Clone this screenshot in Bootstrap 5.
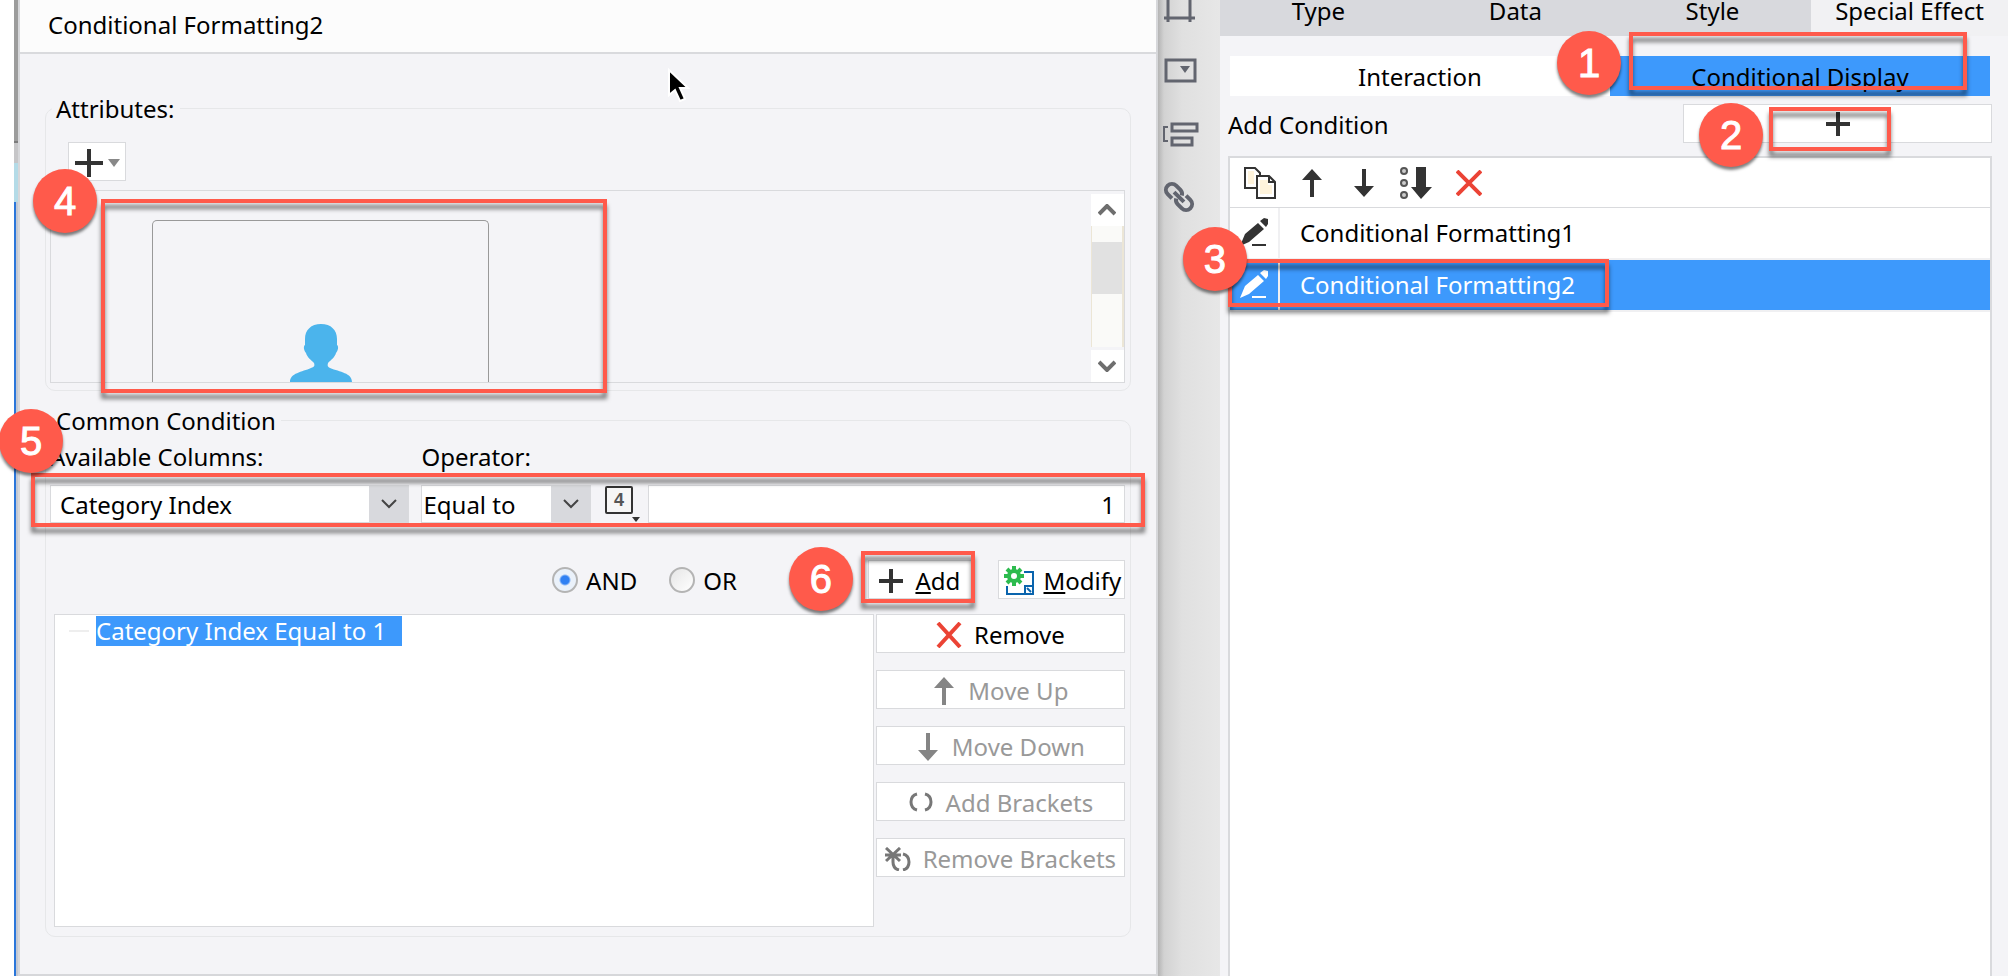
<!DOCTYPE html>
<html lang="en">
<head>
<meta charset="utf-8">
<meta name="viewport" content="width=device-width, initial-scale=1">
<title>Conditional Formatting</title>
<link href="https://cdn.jsdelivr.net/npm/bootstrap@5.3.0/dist/css/bootstrap.min.css" rel="stylesheet">
<script src="https://cdn.jsdelivr.net/npm/bootstrap@5.3.0/dist/js/bootstrap.bundle.min.js"></script>
<style>
  :root { --line: #d9dadd; --accent: #3d99fc; --note: #ff5a4b; --face: #f4f4f7; --ink: #333; }
  body { font-family: "Noto Sans", "Open Sans", sans-serif; font-size: 24px; line-height: 24px; color: #000; background: #fff; overflow-x: hidden; }
  svg { display: block; flex: none; }
  button, select, input { font: inherit; color: inherit; }

  .page-edge { width: 18px; padding-left: 14px; }
  .edge-grey { height: 143px; background: #9c9c9c; border-bottom: 2px solid #7c7c7c; }
  .edge-light { height: 20px; background: #c6c6c8; }
  .edge-sky { height: 39px; background: #b4dbe7; }
  .edge-blue { background: linear-gradient(to right, #2a76da 50%, #c3c8d2 50%); }

  .dialog-box { min-width: 0; background: var(--face); border: 2px solid #d6d7da; border-top: 0; }
  .dialog-title { height: 54px; padding: 0 28px 2px; background: #fcfcfc; border-bottom: 2px solid var(--line); font-size: 24px; font-weight: 400; }
  .dialog-main { padding: 42px 25px 37px 25px; }
  .group { border: 1px solid #e6e7e9; border-radius: 10px; padding: 0 5px 0 4px; min-width: 0; }
  .group legend { font-size: 24px; line-height: 24px; margin: 0 0 0 2px; padding: 1px 5px 0 4px; }
  .group-attr { padding-top: 21px; padding-bottom: 7px; margin-bottom: 17px; }
  .group-cond { padding-top: 12px; padding-bottom: 9px; }

  .tool { background: #fff; border: 1px solid var(--line); border-radius: 0; height: 39px; padding: 2px 0 0; display: flex; align-items: center; justify-content: center; gap: 12px; white-space: nowrap; }
  .tool:disabled { color: #999; opacity: 1; background: #fff; }
  .tool-menu { width: 58px; margin-left: 18px; gap: 5px; }
  .preview { height: 193px; margin-top: 9px; border: 1px solid var(--line); }
  .preview-card { width: 337px; height: 162px; margin: 29px 0 0 101px; border: 1px solid #999; border-bottom: 0; border-radius: 5px 5px 0 0; }
  .scroll-col { width: 33px; padding-top: 3px; }
  .scroll-btn { height: 32px; border: 0; padding: 0; background: #fff; width: 100%; }
  .scroll-track { background: #fafaf8; border: solid #ece6d6; border-width: 0 2px 0 1px; margin-bottom: 3px; padding-top: 16px; }
  .scroll-thumb { height: 52px; background: #e1e1e1; }

  .col-columns { width: 34%; }
  .col-columns + * { margin-left: 6px; }
  .col-pick { padding-right: 6px; }
  .fields { margin-top: 16px; }
  .pick { appearance: none; width: 100%; height: 38px; border: 1px solid var(--line); border-radius: 0; padding: 1px 44px 0 9px; line-height: 36px;
    background: url("data:image/svg+xml,%3Csvg xmlns='http://www.w3.org/2000/svg' width='40' height='38'%3E%3Cpath d='M0 0h40v38H0z' fill='%23d8d9dd'/%3E%3Cpath d='M13 15l7 7 7-7' fill='none' stroke='%23444' stroke-width='2'/%3E%3C/svg%3E") right center / 40px 38px no-repeat border-box #fff; }
  .pick-op { width: 170px; padding-left: 1px; }
  .type-btn { width: 57px; border: 0; padding: 1px 9px 0 13px; background: none; height: 38px; }
  .value-box { min-width: 0; height: 38px; border: 1px solid var(--line); border-radius: 0; padding: 0 9px; text-align: right; }

  .actions { margin-top: 37px; margin-bottom: 15px; }
  .dot { appearance: none; width: 26px; height: 26px; margin: 0 8px 0 0; border: 2px solid #b4b4b4; border-radius: 50%; background: linear-gradient(135deg, #e6e6e6, #fff); }
  .dot:checked { background: radial-gradient(circle, #2f80f3 4px, #eaf1fa 6px); }
  .actions label { margin-right: 32px; padding-top: 2px; }
  .radio-set { margin-right: 99px; }
  .btn-add { width: 104px; margin-right: 26px; }
  .btn-modify { width: 127px; gap: 10px; padding-left: 2px; }
  .tree { min-height: 313px; background: #fff; border: 1px solid var(--line); margin-left: 4px; margin-right: 2px; padding: 1px 0 0 14px; }
  .tree-line { width: 20px; height: 2px; background: #eee; margin-right: 7px; margin-top: 14px; }
  .tree-item { background: var(--accent); color: #fff; height: 30px; line-height: 30px; padding-right: 16px; }
  .side-btns { width: 249px; gap: 17px; }

  .icon-rail { width: 62px; background: linear-gradient(to right, #b4b4b4, #d2d2d2 6px, #e0e0e0 24px, #e7e7e7); padding-left: 5px; }

  .props { width: 39.25%; background: var(--face); }
  .main-tabs { height: 36px; background: #d8d9dd; }
  .main-tabs .tab { height: 36px; border: 0; border-radius: 0; background: none; padding: 0 0 14px; line-height: 22px; flex: 1 1 0; white-space: nowrap; }
  .main-tabs .tab.active { background: #f1f1f3; }
  .props-main { padding: 20px 16px 0 8px; }
  .seg { margin: 0 2px 8px 2px; }
  .seg-btn { flex: 1 1 0; height: 40px; border: 0; padding: 2px 0 0; background: #fff; }
  .seg-btn.active { background: var(--accent); }
  .add-row { margin-bottom: 13px; }
  .add-row label { padding-top: 2px; }
  .add-btn { width: 309px; padding: 0; }
  .cond-box { background: #fff; border: solid var(--line); border-width: 2px 2px 0 2px; }
  .cond-tools { height: 50px; padding: 0 14px; border-bottom: 1px solid var(--line); }
  .cond-tools button { border: 0; background: none; padding: 0; }
  .cond-list { border-collapse: separate; border-spacing: 0; }
  .cond-list td { padding: 0; height: 52px; border-bottom: 2px solid #f0f0f2; vertical-align: middle; }
  .cond-list td:first-child { width: 50px; border-right: 2px solid #f0f0f2; padding-left: 10px; }
  .cond-list td:last-child { padding-left: 20px; }
  .cond-list .picked td { background: var(--accent); background-clip: padding-box; color: #fff; }

  .note-frame { position: absolute; border: 4px solid var(--note); filter: drop-shadow(0 6px 2px rgba(0,0,0,.5)); pointer-events: none; z-index: 2; }
  .note-dot { position: absolute; width: 64px; height: 64px; border-radius: 50%; background: var(--note); color: #fff; font: 40px/64px "Liberation Sans", sans-serif; text-align: center; -webkit-text-stroke: 1px #fff; box-shadow: 0 3px 3px rgba(0,0,0,.5); z-index: 3; }
  .frame-1 { top: -24px; right: 23px; width: 338px; height: 58px; }
  .dot-1 { top: -25px; right: 369px; }
  .frame-2 { top: 3px; right: 101px; width: 122px; height: 44px; }
  .dot-2 { top: -1px; right: 229px; }
  .frame-3 { top: 101px; left: -2px; width: 381px; height: 48px; }
  .dot-3 { top: 69px; left: -47px; }
  .frame-4 { top: 8px; left: 50px; width: 506px; height: 194px; }
  .dot-4 { top: -22px; left: -18px; }
  .frame-5 { inset: -12px -20px -4px -19px; }
  .dot-5 { top: -76px; left: -51px; }
  .frame-6 { inset: -9px -3px -4px -7px; }
  .dot-6 { top: -13px; left: -79px; }
  .pointer { position: absolute; left: 57%; top: 14px; }
</style>
</head>
<body>
<div class="d-flex min-vh-100 align-items-stretch">

  <div class="page-edge d-flex flex-column flex-shrink-0" aria-hidden="true">
    <div class="edge-grey"></div>
    <div class="edge-light"></div>
    <div class="edge-sky"></div>
    <div class="edge-blue flex-grow-1"></div>
  </div>

  <section class="dialog-box flex-grow-1" aria-label="Conditional Formatting2">
    <h1 class="dialog-title d-flex align-items-center m-0">Conditional Formatting2</h1>
    <div class="dialog-main position-relative">
      <svg class="pointer" width="24" height="36" viewBox="0 0 24 36"><path d="M2 2v25l6-5 5 11 5-2-5-11h8z" fill="#000" stroke="#fff" stroke-width="2"/></svg>

      <fieldset class="group group-attr">
        <legend class="float-none w-auto">Attributes:</legend>
        <button type="button" class="tool tool-menu" aria-label="Add attribute">
          <svg width="28" height="28" viewBox="0 0 28 28"><path d="M14 0v28M0 14h28" stroke="#333" stroke-width="4"/></svg>
          <svg width="12" height="9" viewBox="0 0 12 9"><path d="M0 1h12L6 9z" fill="#888"/></svg>
        </button>
        <div class="preview position-relative d-flex">
          <div class="flex-grow-1">
            <div class="preview-card d-flex justify-content-center align-items-end">
              <svg width="62" height="58" viewBox="0 0 62 58"><path fill="#4bb4ec" d="M31 0c10 0 16 6 16 15v6c2 1 1 6-1 8-1 4-5 7-8 10-1 3 0 4 2 5 10 4 22 5 22 14H0C0 49 12 48 21 44c3-1 4-2 3-5-3-3-7-6-8-10-2-2-3-7-1-8v-6C15 6 21 0 31 0z"/></svg>
            </div>
          </div>
          <div class="scroll-col d-flex flex-column">
            <button type="button" class="scroll-btn d-flex justify-content-center align-items-center" aria-label="Scroll up"><svg width="18" height="12" viewBox="0 0 18 12"><path d="M1 10l8-8 8 8" fill="none" stroke="#6e6e6e" stroke-width="4"/></svg></button>
            <div class="scroll-track flex-grow-1"><div class="scroll-thumb"></div></div>
            <button type="button" class="scroll-btn d-flex justify-content-center align-items-center" aria-label="Scroll down"><svg width="18" height="12" viewBox="0 0 18 12"><path d="M1 2l8 8 8-8" fill="none" stroke="#6e6e6e" stroke-width="4"/></svg></button>
          </div>
          <span class="note-frame frame-4"></span>
          <span class="note-dot dot-4">4</span>
        </div>
      </fieldset>

      <fieldset class="group group-cond">
        <legend class="float-none w-auto">Common Condition</legend>
        <div class="d-flex">
          <label class="col-columns" for="columns">Available Columns:</label>
          <label for="operator">Operator:</label>
        </div>
        <div class="fields position-relative d-flex">
          <div class="col-columns col-pick"><select id="columns" class="pick"><option>Category Index</option></select></div>
          <select id="operator" class="pick pick-op"><option>Equal to</option></select>
          <button type="button" class="type-btn d-flex" aria-label="Value type">
            <svg width="36" height="36" viewBox="0 0 36 36"><rect x="2" y="1" width="26" height="26" rx="1" fill="#f6f6f6" stroke="#333" stroke-width="2"/><text x="15" y="20" text-anchor="middle" font-family="Liberation Sans, sans-serif" font-size="18" font-weight="700" fill="#555">4</text><path d="M28 31h8l-4 5z" fill="#333"/></svg>
          </button>
          <input type="text" class="value-box flex-grow-1" value="1" aria-label="Value">
          <span class="note-frame frame-5"></span>
          <span class="note-dot dot-5">5</span>
        </div>

        <div class="actions d-flex justify-content-end align-items-center">
          <div class="radio-set d-flex align-items-center">
            <input class="dot" type="radio" name="join" id="join-and" checked><label for="join-and">AND</label>
            <input class="dot" type="radio" name="join" id="join-or"><label for="join-or" class="flex-shrink-0">OR</label>
          </div>
          <div class="position-relative btn-add">
            <button type="button" class="tool w-100"><svg width="24" height="24" viewBox="0 0 24 24"><path d="M12 0v24M0 12h24" stroke="#333" stroke-width="4"/></svg><span><u>A</u>dd</span></button>
            <span class="note-frame frame-6"></span>
            <span class="note-dot dot-6">6</span>
          </div>
          <button type="button" class="tool btn-modify">
            <svg width="30" height="30" viewBox="0 0 30 30"><path d="M20 6h9v22H3V20" fill="none" stroke="#0a64ad" stroke-width="2"/><rect x="21" y="20" width="8" height="8" fill="#fff" stroke="#0a64ad" stroke-width="2"/><path d="M23 22l4 4" stroke="#0a64ad" stroke-width="2"/><path d="M10 0v20M0 10h20M3 3l14 14M17 3L3 17" stroke="#2dbb4e" stroke-width="4"/><circle cx="10" cy="10" r="5" fill="#fff" stroke="#2dbb4e" stroke-width="4"/></svg>
            <span><u>M</u>odify</span>
          </button>
        </div>

        <div class="d-flex align-items-stretch">
          <div class="tree flex-grow-1 d-flex align-items-start">
            <span class="tree-line"></span><span class="tree-item">Category Index Equal to 1</span>
          </div>
          <div class="side-btns d-flex flex-column flex-shrink-0">
            <button type="button" class="tool"><svg width="26" height="26" viewBox="0 0 26 26"><path d="M2 1l22 24M24 1L2 25" stroke="#eb4335" stroke-width="4"/></svg>Remove</button>
            <button type="button" class="tool" disabled><svg width="24" height="28" viewBox="0 0 24 28"><path d="M12 0l10 11h-8v17h-4V11H2z" fill="#858585"/></svg>Move Up</button>
            <button type="button" class="tool" disabled><svg width="24" height="28" viewBox="0 0 24 28"><path d="M12 28L2 17h8V0h4v17h8z" fill="#858585"/></svg>Move Down</button>
            <button type="button" class="tool" disabled><svg width="26" height="22" viewBox="0 0 26 22"><path d="M9 2C5 3 3 6 3 10s2 7 6 8M17 2c4 1 6 4 6 8s-2 7-6 8" fill="none" stroke="#777" stroke-width="3"/></svg>Add Brackets</button>
            <button type="button" class="tool" disabled><svg width="26" height="24" viewBox="0 0 26 24"><path d="M1 1l14 13M15 1L1 14M0 8h16M14 23c-4-1-6-4-6-8V6M18 7c4 1 6 4 6 8s-2 7-6 8" fill="none" stroke="#777" stroke-width="3"/></svg>Remove Brackets</button>
          </div>
        </div>
      </fieldset>
    </div>
  </section>

  <nav class="icon-rail flex-shrink-0" aria-label="Panels">
    <svg width="38" height="220" viewBox="0 0 38 220" fill="none" stroke="#62656f" stroke-width="3">
      <path d="M5 0v22M27 0v22M1 18h31"/>
      <rect x="3" y="60" width="29" height="21"/><path d="M17 66h10l-5 7z" fill="#62656f" stroke="none"/>
      <rect x="9" y="124" width="25" height="7"/><rect x="9" y="138" width="20" height="7"/><path d="M5 127H1v14h4" stroke-width="2"/>
      <g transform="rotate(45 16 197)" stroke-width="4"><path d="M12 203H6a6 6 0 0 1 0-12h6a6 6 0 0 1 5 3M20 191h6a6 6 0 0 1 0 12h-6a6 6 0 0 1-5-3M9 197h14"/></g>
    </svg>
  </nav>

  <aside class="props flex-shrink-0 d-flex flex-column">
    <div class="main-tabs d-flex">
      <button type="button" class="tab">Type</button>
      <button type="button" class="tab">Data</button>
      <button type="button" class="tab">Style</button>
      <button type="button" class="tab active">Special Effect</button>
    </div>
    <div class="props-main flex-grow-1 d-flex flex-column">
      <div class="seg d-flex position-relative">
        <button type="button" class="seg-btn">Interaction</button>
        <button type="button" class="seg-btn active">Conditional Display</button>
        <span class="note-frame frame-1"></span>
        <span class="note-dot dot-1">1</span>
      </div>
      <div class="add-row d-flex justify-content-between align-items-center position-relative">
        <label for="add-cond">Add Condition</label>
        <button type="button" id="add-cond" class="tool add-btn"><svg width="24" height="24" viewBox="0 0 24 24"><path d="M12 0v24M0 12h24" stroke="#333" stroke-width="4"/></svg></button>
        <span class="note-frame frame-2"></span>
        <span class="note-dot dot-2">2</span>
      </div>
      <div class="cond-box position-relative flex-grow-1">
        <div class="cond-tools d-flex align-items-center">
          <button type="button" aria-label="Copy"><svg width="32" height="32" viewBox="0 0 32 32" stroke="#333" stroke-width="2"><path d="M1 1h10l5 5v15H1z" fill="#fff"/><path d="M4 4h6v13H4z" fill="#fff4dc" stroke="none"/><path d="M13 9h12l6 6v16H13z" fill="#fff"/><path d="M16 13h8v5h4v9H16z" fill="#fff4dc" stroke="none"/><path d="M25 9v6h6" fill="none"/></svg></button>
          <button type="button" class="ms-4" aria-label="Move up"><svg width="24" height="28" viewBox="0 0 24 28"><path d="M12 0l10 11h-8v17h-4V11H2z" fill="#333"/></svg></button>
          <button type="button" class="ms-4 ps-1" aria-label="Move down"><svg width="24" height="28" viewBox="0 0 24 28"><path d="M12 28L2 17h8V0h4v17h8z" fill="#333"/></svg></button>
          <button type="button" class="ms-4" aria-label="Sort"><svg width="32" height="32" viewBox="0 0 32 32"><g fill="#ccc" stroke="#555" stroke-width="2"><circle cx="4" cy="4" r="3"/><circle cx="4" cy="16" r="3"/><circle cx="4" cy="28" r="3"/></g><path d="M16 0h10v20h6L21 32 11 20h5z" fill="#333"/></svg></button>
          <button type="button" class="ms-4" aria-label="Delete"><svg width="26" height="26" viewBox="0 0 26 26"><path d="M1 1l24 24M25 1L1 25" stroke="#eb4335" stroke-width="4"/></svg></button>
        </div>
        <table class="cond-list w-100">
          <tbody>
            <tr><td><svg width="30" height="30" viewBox="0 0 30 30" fill="#333"><path d="M0 28l5-12L18 5l6 6L9 24zM20 3l4-3 4 1v5l-2 3zM12 26h14v2H12z"/></svg></td><td>Conditional Formatting1</td></tr>
            <tr class="picked"><td><svg width="30" height="30" viewBox="0 0 30 30" fill="#fff"><path d="M0 28l5-12L18 5l6 6L9 24zM20 3l4-3 4 1v5l-2 3zM12 26h14v2H12z"/></svg></td><td>Conditional Formatting2</td></tr>
          </tbody>
        </table>
        <span class="note-frame frame-3"></span>
        <span class="note-dot dot-3">3</span>
      </div>
    </div>
  </aside>
</div>
</body>
</html>
